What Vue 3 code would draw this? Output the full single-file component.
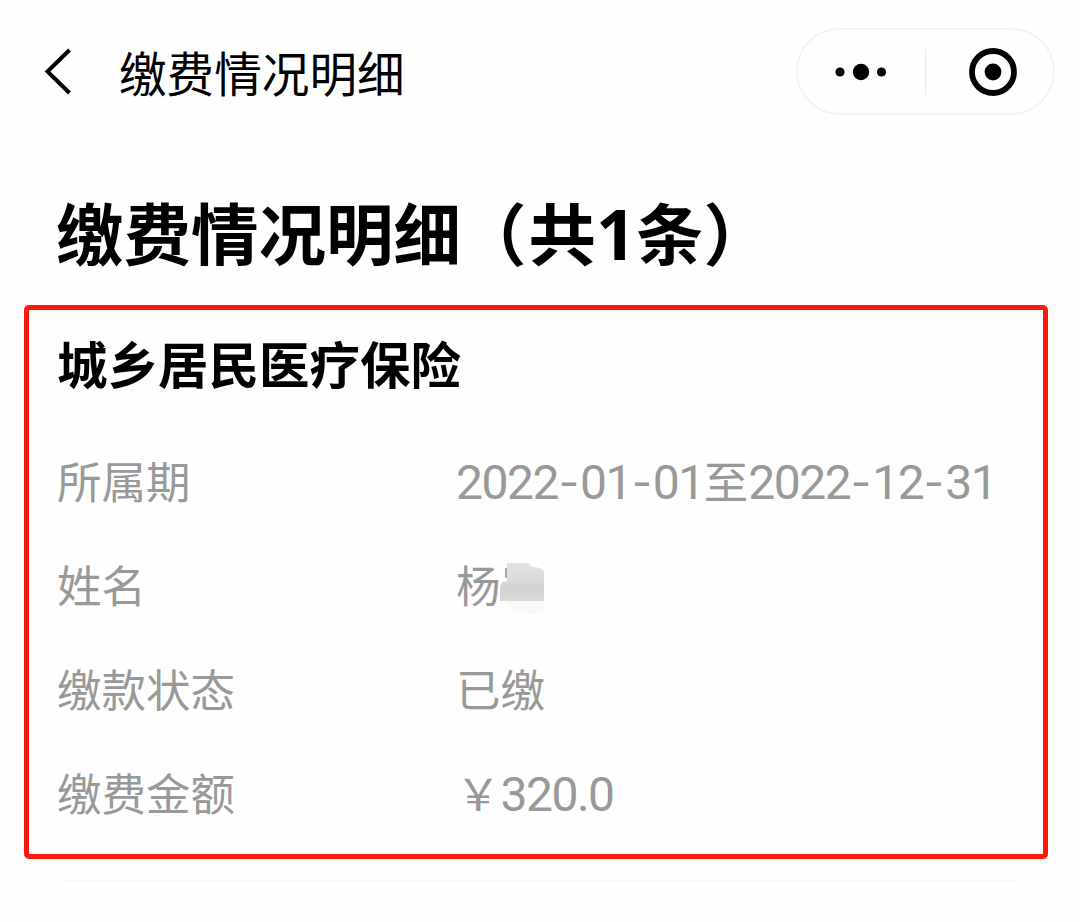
<script setup>
import { computed, ref } from 'vue'

const title = '缴费情况明细'

const records = ref([
  {
    id: 1,
    name: '城乡居民医疗保险',
    start: '2022-01-01',
    end: '2022-12-31',
    surname: '杨',
    status: '已缴',
    amount: '320.0'
  }
])

const total = computed(() => records.value.length)

// 数字与连字符分开排版
const splitDate = (date) => date.split(/(-)/)
</script>

<template>
  <div class="page">
    <header class="nav-bar">
      <svg class="back-icon" viewBox="0 0 28 48" width="28" height="48">
        <path d="M26.500 2 4.500 23.500l22 21.500" fill="none" stroke="#000" stroke-width="4" />
      </svg>
      <span class="nav-title">{{ title }}</span>
      <div class="capsule">
        <svg class="more-icon" viewBox="0 0 52 18" width="52" height="18">
          <circle cx="5" cy="9" r="4.600" />
          <circle cx="26" cy="9" r="8.200" />
          <circle cx="46.500" cy="9" r="4.600" />
        </svg>
        <span class="capsule-line"></span>
        <svg class="close-icon" viewBox="0 0 48 48" width="48" height="48">
          <circle cx="24" cy="24" r="21" fill="none" stroke="#000" stroke-width="5.800" />
          <circle cx="24" cy="24" r="8.400" />
        </svg>
      </div>
    </header>

    <h1 class="heading">{{ title }}<span class="left">（</span>共<span class="total">{{ total }}</span>条）</h1>

    <section v-for="item in records" :key="item.id" class="card">
      <h2 class="card-title">{{ item.name }}</h2>
      <dl class="rows">
        <div class="row">
          <dt>所属期</dt>
          <dd>
            <span class="num"><span v-for="(p, i) in splitDate(item.start)" :key="i" :class="{ dash: p === '-' }">{{ p }}</span></span>至<span class="num"><span v-for="(p, i) in splitDate(item.end)" :key="i" :class="{ dash: p === '-' }">{{ p }}</span></span>
          </dd>
        </div>
        <div class="row">
          <dt>姓名</dt>
          <dd class="name">
            <span>{{ item.surname }}</span>
            <svg class="mask" viewBox="0 0 56 64" width="56" height="64">
              <defs>
                <linearGradient id="maskFill" x1="0" y1="0" x2="0" y2="1">
                  <stop offset="0" stop-color="#e2e2e2" />
                  <stop offset="0.450" stop-color="#dcdcdc" />
                  <stop offset="0.600" stop-color="#d2d2d2" />
                  <stop offset="1" stop-color="#dadada" />
                </linearGradient>
              </defs>
              <path d="M4 46h42l-1 10q-10 6-22 2Q10 54 4 46z" fill="#f9f9f9" />
              <path d="M8 8h21l4 4q10 0 12 5v29H1V32q1-6 7-6z" fill="url(#maskFill)" />
              <path d="M6 13h2v10H6z" fill="#aaa" />
            </svg>
          </dd>
        </div>
        <div class="row">
          <dt>缴款状态</dt>
          <dd>{{ item.status }}</dd>
        </div>
        <div class="row">
          <dt>缴费金额</dt>
          <dd><span class="yen">￥</span><span class="num">{{ item.amount }}</span></dd>
        </div>
      </dl>
    </section>

    <div class="divider"></div>
  </div>
</template>

<style>
body {
  background: #fefefe;
}
</style>

<style scoped>
.page {
  box-sizing: border-box;
  width: 1080px;
  height: 922px;
  overflow: hidden;
  background: #fefefe;
  color: #000;
  font-family: "Noto Sans CJK SC", sans-serif;
}

.nav-bar {
  display: flex;
  align-items: center;
  height: 87px;
  padding: 28px 25px 0 43px;
}
.back-icon {
  flex: none;
}
.nav-title {
  margin-left: 48px;
  font-size: 47.6px;
  line-height: 60px;
}
.capsule {
  box-sizing: border-box;
  display: flex;
  align-items: center;
  width: 259px;
  height: 87px;
  margin-left: auto;
  padding: 0 35px 0 37px;
  border: 2px solid #f3f3f3;
  border-radius: 44px;
}
.capsule-line {
  flex: none;
  width: 1px;
  height: 46px;
  margin: 0 43px 0 38px;
  background: #e9e9e9;
}
.more-icon,
.close-icon {
  flex: none;
}

.heading {
  margin: 71px 0 0 56px;
  font-size: 67.5px;
  font-weight: 700;
  line-height: 90px;
  white-space: nowrap;
}
.total {
  font-family: "Open Sans", "Noto Sans", sans-serif;
  font-size: 70px;
  line-height: 1;
}
.left {
  margin: 0 2px 0 -2px;
}

.card {
  box-sizing: border-box;
  width: 1024px;
  height: 554px;
  margin: 29px 0 0 24px;
  padding: 20px 0 0 28px;
  border: 5px solid #fd1a0b;
  border-radius: 5px;
}
.card-title {
  margin: 0;
  font-size: 50.5px;
  font-weight: 700;
  line-height: 64px;
}
.rows {
  margin: 33px 0 0;
  color: #999;
  font-size: 44.5px;
}
.row {
  display: flex;
  align-items: center;
  height: 104px;
}
dt {
  width: 399px;
}
dd {
  margin: 0;
  padding-top: 1px;
  line-height: 60px;
  white-space: nowrap;
}
.num {
  font-family: Roboto, "Noto Sans CJK SC", sans-serif;
  font-size: 48px;
  letter-spacing: -1.5px;
  line-height: 1;
}
.dash {
  display: inline-block;
  width: 22px;
  letter-spacing: 0;
  text-align: center;
  transform: scaleX(1.25);
}
.name {
  display: flex;
  align-items: center;
}
.mask {
  margin: 7px 0 0 -2px;
}

.divider {
  width: 960px;
  height: 3px;
  margin: 20px 0 0 60px;
  background: #f9f9f9;
}
</style>
